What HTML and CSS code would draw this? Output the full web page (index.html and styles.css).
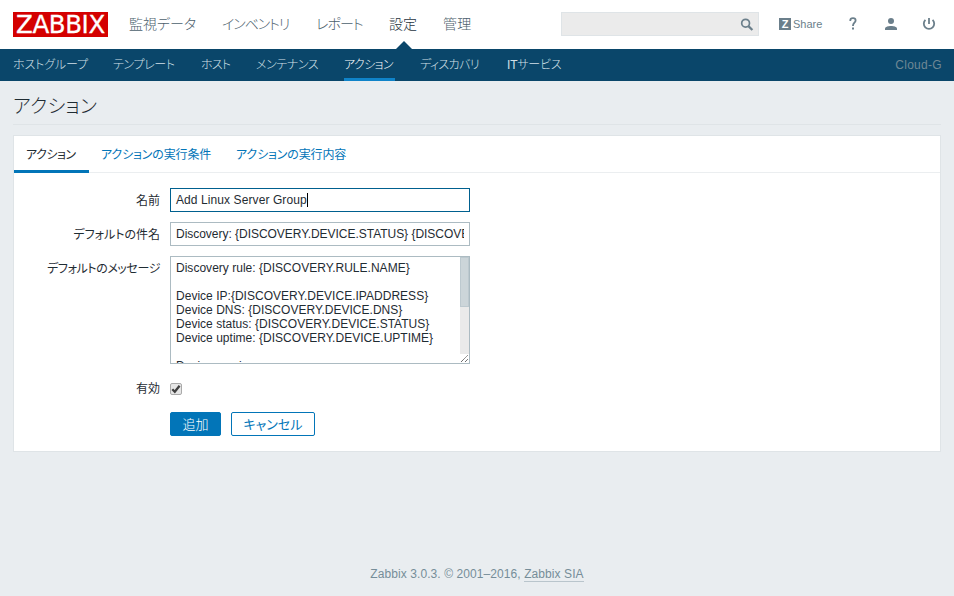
FILE: index.html
```html
<!DOCTYPE html>
<html lang="ja">
<head>
<meta charset="utf-8">
<title>アクション</title>
<link rel="stylesheet" href="styles.css">
</head>
<body>
<header class="top">
  <a class="logo">ZABBIX</a>
  <nav class="main-nav">
    <a class="n1">監視データ</a>
    <a class="n2">インベントリ</a>
    <a class="n3">レポート</a>
    <a class="n4 selected">設定</a>
    <a class="n5">管理</a>
  </nav>
  <div class="search">
    <svg width="14" height="14" viewBox="0 0 14 14"><circle cx="5.6" cy="5.2" r="3.9" fill="none" stroke="#6b7f8b" stroke-width="1.7"/><path d="M8.4 8.1L12.4 12" stroke="#6b7f8b" stroke-width="2.2"/></svg>
  </div>
  <div class="tools">
    <a class="share"><span class="z">Z</span>Share</a>
    <a class="help"><svg width="8" height="14" viewBox="0 0 8 14"><path d="M1.3 4V3.4C1.3 1.9 2.4 1.1 4 1.1s2.6.9 2.6 2.3C6.6 5.6 4 5.8 4 8.5V9" fill="none" stroke="#6b7f8b" stroke-width="1.8"/><path d="M3 10.4h2v2H3z" fill="#6b7f8b"/></svg></a>
    <a class="user"><svg width="12" height="12" viewBox="0 0 12 12" fill="#6b7f8b"><circle cx="6" cy="3" r="3"/><path d="M0 12V10.5C0 8.7 3 7.9 6 7.9s6 .8 6 2.6V12z"/></svg></a>
    <a class="power"><svg width="14" height="14" viewBox="0 0 14 14" fill="none" stroke="#6b7f8b" stroke-width="1.8"><path d="M7 1v6M3.4 2.9A5.2 5.2 0 1 0 10.6 2.9"/></svg></a>
  </div>
</header>
<nav class="sub-nav">
  <a class="s1">ホストグループ</a>
  <a class="s2">テンプレート</a>
  <a class="s3">ホスト</a>
  <a class="s4">メンテナンス</a>
  <a class="s5 selected">アクション</a>
  <a class="s6">ディスカバリ</a>
  <a class="s7">ITサービス</a>
  <span class="server">Cloud-G</span>
</nav>
<main>
  <h1>アクション</h1>
  <section class="panel">
    <div class="tabs">
      <a class="t1 active">アクション</a>
      <a class="t2">アクションの実行条件</a>
      <a class="t3">アクションの実行内容</a>
    </div>
    <form class="form">
      <label class="l1">名前</label>
      <div class="field focus"><span class="value">Add Linux Server Group</span><i class="caret"></i></div>
      <label class="l2">デフォルトの件名</label>
      <div class="field"><span class="clip">Discovery: {DISCOVERY.DEVICE.STATUS} {DISCOVERY.DEVICE.IPADDRESS}</span></div>
      <label class="l3">デフォルトのメッセージ</label>
      <div class="area">
        <div class="area-text">Discovery rule: {DISCOVERY.RULE.NAME}

Device IP:{DISCOVERY.DEVICE.IPADDRESS}
Device DNS: {DISCOVERY.DEVICE.DNS}
Device status: {DISCOVERY.DEVICE.STATUS}
Device uptime: {DISCOVERY.DEVICE.UPTIME}

Device service name:</div>
        <div class="scroll"><div class="thumb"></div><svg class="grip" width="9" height="9" viewBox="0 0 9 9"><path d="M1 8L8 1M5 8L8 5" stroke="#555" stroke-dasharray="1.2 .4" fill="none"/></svg></div>
      </div>
      <label class="l4">有効</label>
      <div class="check-row"><span class="check"><svg width="10" height="10" viewBox="0 0 10 10"><path d="M1.3 5.2L3.8 7.8L8.6 1.8" fill="none" stroke="#404040" stroke-width="2.3"/></svg></span></div>
      <span></span>
      <div class="buttons"><a class="btn primary">追加</a><a class="btn cancel">キャンセル</a></div>
    </form>
  </section>
</main>
<footer>Zabbix 3.0.3. © 2001–2016, <a>Zabbix SIA</a></footer>
</body>
</html>
```

FILE: styles.css
```css
* { box-sizing: border-box; }
body {
  margin: 0;
  height: 596px;
  display: flex;
  flex-direction: column;
  overflow: hidden;
  background: #e9edf0;
  color: #1f2c33;
  font: 12px/14px "Liberation Sans", "Noto Sans CJK JP", sans-serif;
  font-feature-settings: "palt";
}
a, label, h1 { white-space: nowrap; }
.top { display: flex; height: 49px; background: #fff; padding: 12px 0 0 13px; }
.logo {
  width: 95px; height: 25px; padding-left: 3px;
  background: #d40000; color: #fff; -webkit-text-stroke: .3px #fff;
  font: 24.5px/25px "DejaVu Sans", sans-serif; letter-spacing: -.4px;
}
.main-nav { display: flex; width: 453px; padding-left: 21px; font-size: 14px; line-height: 24px; color: #4c616d; font-weight: 300; }
.main-nav a { flex: none; height: 37px; }
.n1 { width: 93px; }
.n2 { width: 94px; letter-spacing: -1.1px; }
.n3 { width: 73px; letter-spacing: -.9px; }
.n4 { width: 54px; }
.n5 { letter-spacing: .3px; }
.main-nav .selected { position: relative; color: #1f3541; }
.main-nav .selected::after {
  content: ""; position: absolute; left: 7px; bottom: 0;
  border: 8px solid transparent; border-top: 0; border-bottom-color: #0a466a;
}
.search { width: 198px; height: 24px; background: #ebebeb; border: 1px solid #dfe4e7; padding: 5px 0 0 178px; line-height: 0; }
.tools { display: flex; align-items: center; height: 24px; margin-left: 20px; font-size: 11px; color: #6b7f8b; }
.share { display: flex; align-items: center; width: 70px; gap: 2px; }
.z { width: 12px; height: 12px; background: #6b7f8b; color: #fff; font: bold 11px/12px "Liberation Sans", sans-serif; text-align: center; }
.tools svg { display: block; }
.help { width: 36px; }
.user { width: 37px; }
.sub-nav { display: flex; height: 32px; padding-left: 13px; background: #0a466a; color: #d3e0e8; line-height: 33px; font-weight: 300; }
.sub-nav a { flex: none; }
.s1 { width: 75px; margin-right: 25px; letter-spacing: -.15px; }
.s2 { width: 62px; margin-right: 26px; letter-spacing: -.35px; }
.s3 { width: 29px; margin-right: 26px; letter-spacing: -.8px; }
.s4 { width: 63px; margin-right: 25px; letter-spacing: -.4px; }
.s5 { width: 51px; margin-right: 25px; letter-spacing: -.6px; }
.s6 { width: 62px; margin-right: 25px; letter-spacing: -.6px; }
.s7 { letter-spacing: -.2px; }
.sub-nav .selected { color: #fff; border-bottom: 3px solid #0f83c9; }
.server { margin: 0 12px 0 auto; color: #6f8895; font-weight: 400; letter-spacing: .3px; }
main { padding: 0 13px; }
h1 { margin: 0 0 10px; height: 44px; border-bottom: 1px solid #dfe4e7; font-size: 19px; line-height: 52px; font-weight: 300; letter-spacing: .4px; }
.panel { height: 317px; background: #fff; border: 1px solid #dfe4e7; }
.tabs { display: flex; height: 37px; border-bottom: 1px solid #ebeef0; line-height: 38px; color: #0275b8; letter-spacing: -.15px; }
.tabs a { height: 37px; flex: none; }
.t1 { width: 75px; padding-left: 12px; margin-right: 12px; letter-spacing: -.5px; }
.t2 { width: 135px; }
.tabs .active { color: #1f2c33; border-bottom: 3px solid #0275b8; }
.form { display: grid; grid-template-columns: 146px 300px; column-gap: 10px; padding-top: 15px; }
label { text-align: right; line-height: 26px; }
.l3 { letter-spacing: -.4px; }
.field { display: flex; align-items: center; height: 24px; margin-bottom: 10px; padding: 0 5px; border: 1px solid #acbbc2; background: #fff; font-feature-settings: normal; }
.focus { border-color: #00608f; }
.value { letter-spacing: .09px; }
.caret { width: 1px; height: 14px; background: #000; }
.clip { width: 289px; overflow: hidden; white-space: nowrap; letter-spacing: -.03px; }
.area { display: flex; height: 108px; border: 1px solid #acbbc2; overflow: hidden; }
.area-text { width: 289px; padding: 4px 0 0 5px; white-space: pre; font-feature-settings: normal; letter-spacing: .02px; }
.scroll { width: 9px; height: 106px; display: flex; flex-direction: column; justify-content: space-between; background: #eaeaea; }
.thumb { height: 50px; background: #ccd5d9; border: 1px solid #bdc9cf; }
.grip { display: block; background: #fff; }
.l4 { margin-top: 12px; }
.check-row { padding-top: 19px; }
.check { display: block; width: 12px; height: 12px; padding: 0; line-height: 0; border: 1px solid #aaa; border-radius: 2px; background: #e6e6e6; }
.buttons { display: flex; gap: 10px; padding-top: 10px; }
.btn { height: 24px; border: 1px solid #0275b8; border-radius: 2px; font-size: 13px; line-height: 23px; text-align: center; color: #0275b8; }
.primary { width: 51px; background: #0275b8; color: #fff; font-weight: 300; }
.cancel { width: 84px; }
footer { margin-top: 115px; text-align: center; color: #768d99; letter-spacing: .08px; }
footer a { border-bottom: 1px solid #b9c5cc; }
```
